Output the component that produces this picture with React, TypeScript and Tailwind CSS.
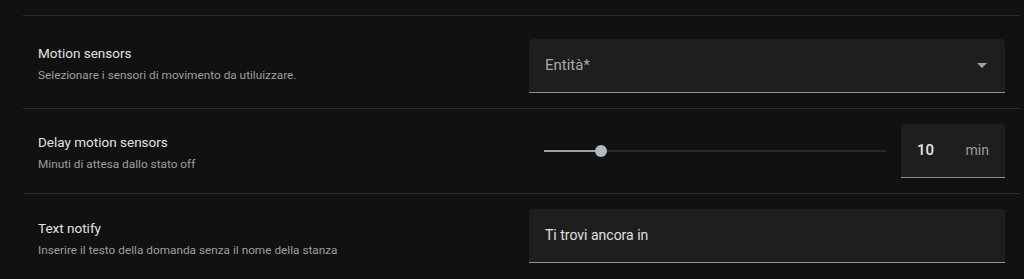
import React from 'react'

type RowProps = {
  title: string
  description: string
  className?: string
  textClassName?: string
  children: React.ReactNode
}

// one settings row: heading + description on the left, control on the right
function SettingsRow({ title, description, className = '', textClassName = '', children }: RowProps) {
  return (
    <div className={`flex items-center border-t border-[#2c2c2c] pl-[15px] pr-[15px] ${className}`}>
      <div className={`flex flex-1 min-w-0 flex-col ${textClassName}`}>
        <div className="text-[13.5px] leading-[22px] text-[#e1e1e1]">{title}</div>
        <div className="text-[11.8px] leading-[22px] text-[#9e9e9e]">{description}</div>
      </div>
      <div className="w-[476px] flex-shrink-0">{children}</div>
    </div>
  )
}

function FilledField({ children, className = '' }: { children: React.ReactNode; className?: string }) {
  return (
    <div
      className={`flex h-[54px] items-center rounded-t-[4px] border-b border-[#8e8e8e] bg-[#1e1e1e] px-4 text-[14px] ${className}`}
    >
      {children}
    </div>
  )
}

function Slider({ value, max }: { value: number; max: number }) {
  const pct = (value / max) * 100
  return (
    <div className="relative h-[12px] flex-1">
      <div className="absolute left-0 right-0 top-[5px] h-[2px] bg-[#2a2a2a]" />
      <div className="absolute left-0 top-[5px] h-[2px] bg-[#9aa1a6]" style={{ width: `${pct}%` }} />
      <div
        className="absolute top-0 h-[12px] w-[12px] -translate-x-1/2 rounded-full bg-[#b2b8bd]"
        style={{ left: `${pct}%` }}
      />
    </div>
  )
}

export default function App() {
  return (
    <div
      className="h-[279px] w-[1024px] overflow-hidden bg-[#111111] pt-[15px]"
      style={{ fontFamily: 'Roboto, "Liberation Sans", sans-serif' }}
    >
      <div className="ml-[23px] w-[997px]">
        <SettingsRow
          title="Motion sensors"
          description="Selezionare i sensori di movimento da utiluizzare."
          className="pt-[23px] pb-[15px]"
          textClassName="-mt-[4px]"
        >
          <FilledField className="justify-between">
            <span className="text-[15px] text-[#a8a8a8]">Entità*</span>
            <svg width="10" height="5" viewBox="0 0 10 5" className="mr-[2px]">
              <path d="M0 0 L10 0 L5 5 Z" fill="#a0a0a0" />
            </svg>
          </FilledField>
        </SettingsRow>

        <SettingsRow
          title="Delay motion sensors"
          description="Minuti di attesa dallo stato off"
          className="py-[15px]"
          textClassName="mt-[4px]"
        >
          <div className="flex items-center">
            <div className="flex flex-1 px-[15px]">
              <Slider value={57} max={342} />
            </div>
            <FilledField className="w-[104px] justify-between">
              <span className="font-medium text-[15px] text-[#e8e8e8]">10</span>
              <span className="text-[#9e9e9e]">min</span>
            </FilledField>
          </div>
        </SettingsRow>

        <SettingsRow
          title="Text notify"
          description="Inserire il testo della domanda senza il nome della stanza"
          className="py-[15px]"
          textClassName="mt-[6px]"
        >
          <FilledField>
            <span className="text-[#e1e1e1]">Ti trovi ancora in</span>
          </FilledField>
        </SettingsRow>
      </div>
    </div>
  )
}
